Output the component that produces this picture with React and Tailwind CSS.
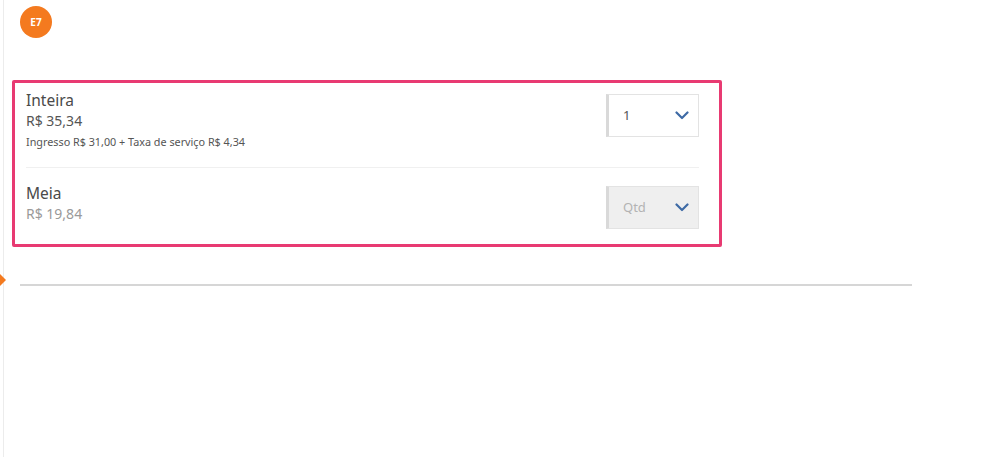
const Chevron = () => (
    <svg width="14" height="9" viewBox="0 0 14 9" fill="none">
        <path d="M1.5 1.5L7 7L12.5 1.5" stroke="#3e6aa5" strokeWidth="2.2" strokeLinecap="round" strokeLinejoin="round" />
    </svg>
);

const QtySelect = ({ value, disabled }) => (
    <div
        className={`w-[93px] h-[43px] flex items-center justify-between pl-[14px] pr-[9px] border border-[#e3e3e3] border-l-[3px] border-l-[#d9d9d9] ${
            disabled ? 'bg-[#efefef] text-[#b3b3b3]' : 'bg-white text-[#555]'
        }`}
    >
        <span className="text-[13px]">{value}</span>
        <Chevron />
    </div>
);

const TicketRow = ({ name, price, detail, qty, disabled, last }) => (
    <div className={`flex justify-between ${last ? 'pt-[15px] pb-[15px]' : 'pb-[18px] border-b border-[#f0f0f0]'}`}>
        <div className="flex flex-col">
            <span className="text-[15.5px] leading-[20px] text-[#4a4a4a]">{name}</span>
            <span className={`text-[14px] leading-[18px] mt-[2px] ${disabled ? 'text-[#9a9a9a]' : 'text-[#555]'}`}>{price}</span>
            {detail && <span className="text-[10.8px] leading-[14px] mt-[5px] text-[#555]">{detail}</span>}
        </div>
        <div className={last ? 'pt-[3px]' : 'pt-[4px]'}>
            <QtySelect value={qty} disabled={disabled} />
        </div>
    </div>
);

export default function App() {
    return (
        <div className="w-[984px] h-[457px] bg-white relative overflow-hidden" style={{ fontFamily: '"Noto Sans", "Open Sans", sans-serif' }}>
            <div className="absolute left-[3px] top-0 bottom-0 w-px bg-[#ececec]" />
            <div className="pl-[20px] pt-[6px]">
                <div className="w-[32px] h-[32px] rounded-full bg-[#f47a1f] flex items-center justify-center text-white text-[10px] font-bold">
                    E7
                </div>
            </div>
            <div className="ml-[12px] mt-[42px] w-[710px] border-[3px] border-[#e83a72] rounded-[2px] pl-[11px] pr-[20px] pt-[7px]">
                <TicketRow name="Inteira" price="R$ 35,34" detail="Ingresso R$ 31,00 + Taxa de serviço R$ 4,34" qty="1" />
                <TicketRow name="Meia" price="R$ 19,84" qty="Qtd" disabled last />
            </div>
            <div className="relative mt-[37px] h-[2px]">
                <div className="absolute left-0 top-[-10px] w-0 h-0 border-y-[6px] border-y-transparent border-l-[6px] border-l-[#f47a1f]" />
                <div className="ml-[20px] w-[892px] h-[2px] bg-[#d6d6d6]" />
            </div>
        </div>
    );
}
